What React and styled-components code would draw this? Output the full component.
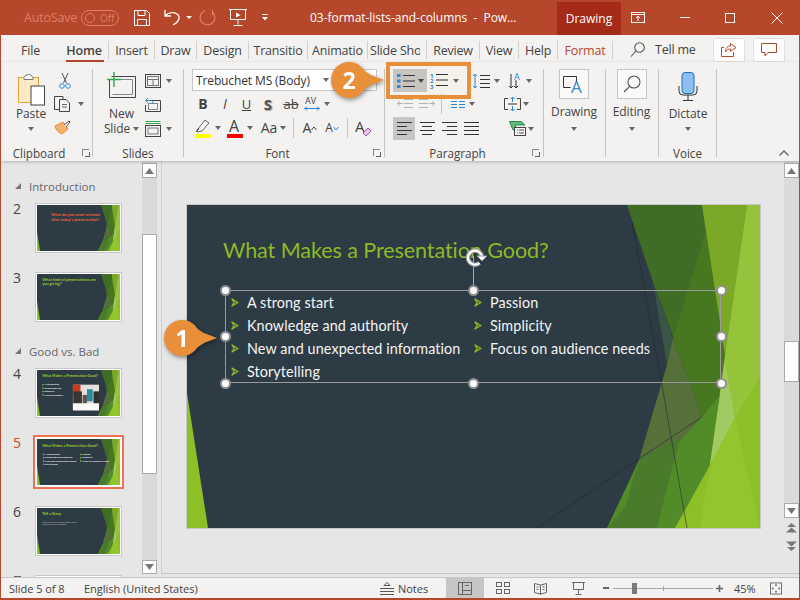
import React from "react";
import styled, { createGlobalStyle } from "styled-components";

const ui = `"Open Sans", "Noto Sans", "Liberation Sans", sans-serif`;
const slideFont = `"Lato", "Noto Sans", "Liberation Sans", sans-serif`;
const ink = "#444444";
const blue = "#2B88D8";
const orange = "#E98F3A";

const Global = createGlobalStyle`
  html, body { margin: 0; padding: 0; background: #E6E6E6; }
  * { box-sizing: border-box; }
`;

const Window = styled.div`
  position: relative; width: 800px; height: 600px; overflow: hidden;
  display: flex; flex-direction: column;
  border: solid #B7472A; border-width: 0 1px 2px 1px;
  background: #E6E6E6; font-family: ${ui}; color: ${ink};
`;

/* Title bar */
const TitleBar = styled.header`
  height: 35px; flex: none; display: flex; align-items: center;
  background: #B7472A; color: #fff; margin: 0 -1px; font-size: 12px;
`;
const AutoSave = styled.span`margin-left: 24px; width: 57px; color: #DE7F68; font-size: 12.5px; letter-spacing: -.2px;`;
const Toggle = styled.span`
  width: 38px; height: 16px; border: 1.4px solid #DE7F68; border-radius: 8px;
  color: #DE7F68; font-size: 10px; display: flex; align-items: center; gap: 5px; padding-left: 3px;
  &::before { content: ""; width: 8px; height: 8px; border-radius: 50%; border: 1.3px solid #DE7F68; }
`;
const Slot = styled.span`
  flex: none; display: inline-flex; align-items: center; justify-content: center;
  width: ${p => p.$w}px; margin-left: ${p => p.$l || 0}px;
`;
const DocTitle = styled.span`margin-left: 41px; width: 247px; white-space: pre; letter-spacing: -.03px;`;
const ContextTab = styled.span`
  width: 64px; height: 33px; margin-top: 2px; background: #A42B17;
  display: flex; align-items: center; justify-content: center;
`;

/* Tabs */
const TabRow = styled.nav`
  height: 27px; flex: none; display: flex; align-items: flex-start;
  background: #F3F2F1; font-size: 12.5px;
`;
const Tab = styled.span`
  position: relative; flex: none; width: ${p => p.$w}px; height: 18px; margin-top: 6px;
  display: flex; align-items: center; justify-content: center; white-space: nowrap;
  border-right: ${p => p.$plain ? "none" : "1px solid #D2D0CE"};
  color: ${p => p.$color || ink};
  font-weight: ${p => p.$active ? 600 : 400};
  letter-spacing: -.2px;
  ${p => p.$active && `&::after { content: ""; position: absolute; left: 6px; right: 4px; top: 19px; height: 2px; background: #B7472A; }`}
`;
const ClipText = styled.span`display: block; width: 50px; margin-left: -4px; overflow: hidden;`;
const SearchSlot = styled(Slot)`margin-top: 7px;`;
const SmallButton = styled.span`
  flex: none; width: 32px; height: 24px; margin: 3px 0 0 ${p => p.$l}px; background: #fff;
  border: 1px solid #E1DFDD; border-radius: 2px; display: flex; align-items: center; justify-content: center;
`;
const TellMe = styled.span`margin: 6px 0 0 10px; width: 48px; height: 18px; line-height: 18px; letter-spacing: -.2px;`;

/* Ribbon */
const Ribbon = styled.section`
  position: relative; z-index: 2; height: 99px; flex: none; display: flex; align-items: flex-start; padding-top: 7px;
  background: #F3F2F1; box-shadow: 0 1px 3px rgba(0,0,0,.22); font-size: 12px;
`;
const Group = styled.div`
  position: relative; flex: none; width: ${p => p.$w}px; height: 88px; display: flex; flex-direction: column;
  border-right: 1px solid ${p => p.$plain ? "transparent" : "#C4C4C4"};
`;
const GroupBody = styled.div`height: 76px; flex: none; display: flex; padding-left: ${p => p.$pl || 0}px;`;
const GroupLabel = styled.div`
  height: 16px; line-height: 16px; text-align: center; font-size: 11.7px; color: ${ink};
  padding-right: ${p => p.$pr || 0}px; letter-spacing: -.05px;
`;
const Launcher = styled.span`
  position: absolute; left: ${p => p.$l}px; top: 80px; width: 7px; height: 7px;
  border: solid #8A8886; border-width: 1px 0 0 1px;
  &::after { content: ""; position: absolute; right: -1px; bottom: -1px; width: 4px; height: 4px; border: solid #605E5C; border-width: 0 1px 1px 0; }
`;
const Caret = styled.span`
  flex: none; display: inline-block; width: 0; height: 0; margin-left: ${p => p.$l ?? 3}px; margin-right: ${p => p.$r ?? 0}px;
  border: solid transparent; border-width: 4px 3.5px 0; border-top-color: ${p => p.$c || "#666"};
`;
const BigCol = styled.div`
  flex: none; width: ${p => p.$w}px; display: flex; flex-direction: column; align-items: center; line-height: 15px;
  letter-spacing: -.1px;
`;
const BigText = styled.span`margin-top: ${p => p.$t || 0}px; display: flex; align-items: center; height: 15px;`;
const BigCaret = styled(Caret)`margin-top: ${p => p.$t}px;`;
const BigIcon = styled.span`
  flex: none; display: inline-flex; align-items: center; justify-content: center; margin-top: ${p => p.$t}px;
`;
const StackCol = styled.div`flex: none; margin-left: ${p => p.$l}px; display: flex; flex-direction: column;`;
const ToolRow = styled.div`
  display: flex; align-items: center; height: ${p => p.$h}px; margin-top: ${p => p.$t || 0}px; padding-left: ${p => p.$pl || 0}px;
`;
const Tool = styled.span`
  flex: none; display: inline-flex; align-items: center; justify-content: center;
  width: ${p => p.$w}px; height: 100%; margin-left: ${p => p.$l || 0}px;
  background: ${p => p.$bg || "transparent"};
`;
const Glyph = styled.span`
  font-size: ${p => p.$s || 14}px; font-weight: ${p => p.$b ? 700 : 400}; font-style: ${p => p.$i ? "italic" : "normal"};
  text-decoration: ${p => p.$d || "none"}; color: ${ink}; line-height: 1;
`;
const ShadowGlyph = styled(Glyph)`color: #555; text-shadow: 1px 1px 1px #999;`;
const Combo = styled.div`
  width: 185px; height: 22px; margin-left: 8px; background: #fff; border: 1px solid #C8C6C4;
  display: flex; align-items: center; padding-left: 3px; font-size: 12px; letter-spacing: -.12px; color: #333;
`;
const ComboText = styled.span`flex: none; width: 127px; white-space: nowrap;`;
const VSep = styled.span`flex: none; width: 1px; height: ${p => p.$h}px; background: #C8C6C4; margin-left: ${p => p.$l}px;`;
const SquareIcon = styled.div`
  width: 30px; height: 30px; background: #FAF9F8; border: 1px solid #C8C6C4; display: flex; align-items: center; justify-content: center;
`;
const Collapse = styled.svg`position: absolute; right: 10px; top: 88px;`;

/* Workspace */
const Workspace = styled.main`flex: 1; min-height: 0; display: flex; background: #E6E6E6;`;
const Pane = styled.aside`flex: none; width: 141px; height: 100%; overflow: hidden; display: flex; flex-direction: column; padding-top: 15px;`;
const Section = styled.div`
  flex: none; height: 20px; margin-top: ${p => p.$t || 0}px; display: flex; align-items: center; gap: 8px; padding-left: 14px; font-size: 11.5px; color: #666;
  &::before { content: ""; width: 0; height: 0; border: solid transparent; border-width: 0 0 6px 6px; border-bottom-color: #777; }
`;
const ThumbRow = styled.div`flex: none; display: flex; margin-top: ${p => p.$t}px; padding-left: 12px;`;
const Num = styled.span`width: 22px; font-size: 14px; line-height: 16px; margin-top: -2px; color: ${p => p.$on ? "#C8472B" : "#444"};`;
const NumSliver = styled.span`width: 22px; display: block; &::before { content: ""; display: block; width: 7px; height: 1px; margin: 1px 0 0 1px; background: #666; }`;
const Thumb = styled.div`
  width: 87px; height: 50px; background: #fff; border: 1px solid #C8C8C8; padding: 1px 1px;
  ${p => p.$on && `border: 1px solid #fff; box-shadow: 0 0 0 2px #F0704F; padding: 1px;`}
  display: flex; svg { display: block; width: 100%; height: 100%; }
`;
const SideBar = styled.div`
  flex: none; width: 15px; height: ${p => p.$h}; margin-top: ${p => p.$mt || 0}px; background: #DADADA; display: flex; flex-direction: column;
`;
const ScrollBtn = styled.span`
  flex: none; height: ${p => p.$h || 15}px; background: #fff; border: 1px solid #ABABAB; display: flex; align-items: center; justify-content: center;
`;
const TopGutter = styled.span`flex: none; height: 2px;`;
const ScrollTrack = styled.div`flex: 1; padding-top: ${p => p.$t}px;`;
const ScrollThumb = styled.div`height: ${p => p.$h}px; background: #fff; border: 1px solid #ABABAB;`;
const Divider = styled.div`flex: none; width: 1px; margin: 0 0 3px 4px; background: #CFCFCF;`;
const Canvas = styled.div`
  flex: 1; min-width: 0; height: 413px; padding: 44px 0 0 25px; border-bottom: 1px solid #C6C6C6;
`;
const Rail = styled.div`flex: none; width: 15px; height: 413px; display: flex; flex-direction: column; align-items: center; border-bottom: 1px solid #C6C6C6;`;
const RailMark = styled.span`flex: none; display: flex; margin-top: ${p => p.$t}px;`;
const SlideFrame = styled.div`
  position: relative; width: 573px; height: 323px; background: #2D3B44; outline: 1px solid #C8C8C8;
  svg.art { position: absolute; inset: 0; width: 100%; height: 100%; }
`;
const SlideTitle = styled.div`
  position: absolute; left: 36px; top: 30px; font-family: ${slideFont}; font-size: 21.6px; line-height: 30px; color: #8CBA26; white-space: nowrap; letter-spacing: -.1px;
`;
const TextBox = styled.div`
  position: absolute; left: 38px; top: 85px; width: 496px; height: 93px; border: 1px solid #9A9A9A;
  display: grid; grid-template-columns: 243px 1fr; padding: 0 0 0 5px; align-content: start;
`;
const BulletCol = styled.ul`margin: 0; padding: 0; list-style: none;`;
const Bullet = styled.li`
  height: 23px; display: flex; align-items: center; gap: 8px; font-family: ${slideFont}; font-size: 14.36px; color: #F4F4F4; white-space: nowrap;
  letter-spacing: .1px;
  svg { flex: none; }
`;
const Handle = styled.span`
  position: absolute; left: ${p => p.$x}px; top: ${p => p.$y}px; width: 11px; height: 11px; margin: -5.5px 0 0 -5.5px;
  background: #fff; border: 2px solid #8F8F8F; border-radius: 50%;
`;
const RotateStem = styled.span`position: absolute; left: 286px; top: 51px; width: 1px; height: 34px; background: #A8A8A8;`;
const RotateIcon = styled.svg`position: absolute; left: 277px; top: 40px;`;

/* Overlays */
const Callout = styled.div`
  position: absolute; z-index: 5; left: ${p => p.$x}px; top: ${p => p.$y}px; width: 36px; height: 36px; border-radius: 50%;
  background: ${orange}; color: #fff; font-family: ${ui}; font-weight: 700; font-size: 23px;
  display: flex; align-items: center; justify-content: center; filter: drop-shadow(1px 2px 2px rgba(0,0,0,.4));
  &::after {
    content: ""; position: absolute; left: 28px; top: 5px; width: 25px; height: 26px; background: ${orange};
    clip-path: polygon(0 0, 45% 30%, 100% 50%, 50% 68%, 0 100%);
  }
`;
const CalloutText = styled.span`position: relative; z-index: 1;`;
const Highlight = styled.div`
  position: absolute; z-index: 4; left: 385px; top: 62px; width: 85px; height: 37px; border: 4px solid ${orange}; pointer-events: none;
`;

/* Status */
const StatusBar = styled.footer`
  position: relative; height: 21px; flex: none; display: flex; align-items: center; background: #F3F2F1;
  border-top: 1px solid #C6C6C6; font-size: 11px; color: ${ink};
`;
const StatusText = styled.span`flex: none; margin-left: ${p => p.$l}px; width: ${p => p.$w}px; white-space: nowrap; letter-spacing: -.03px;`;
const ViewBtn = styled.span`
  flex: none; height: 100%; width: ${p => p.$w}px; margin-left: ${p => p.$l || 0}px; display: flex; align-items: center; justify-content: center;
  background: ${p => p.$on ? "#C8C6C4" : "transparent"};
`;
const ZoomTrack = styled.span`
  position: relative; flex: none; width: 100px; height: 1px; background: #A6A6A6; margin-left: 4px;
  &::before { content: ""; position: absolute; left: 50px; top: -2px; width: 1px; height: 5px; background: #A6A6A6; }
  &::after { content: ""; position: absolute; left: 19px; top: -5px; width: 5px; height: 11px; background: #7A7A7A; }
`;

/* Icons */
const S = ({ w, h, children, stroke = ink, sw = 1 }) => (
  <svg width={w} height={h} viewBox={`0 0 ${w} ${h}`} fill="none" stroke={stroke} strokeWidth={sw}>{children}</svg>
);

const Art = ({ children }) => (
  <svg className="art" viewBox="0 0 573 323" preserveAspectRatio="none">
    <rect width="573" height="323" fill="#2D3B44" />
    <polygon points="0,188 21,323 0,323" fill="#8DBF26" />
    <polygon points="515,0 573,0 573,323 420,323 515,212 525,120" fill="#528C28" />
    <polygon points="440,0 515,0 538,150 525,238 466,77" fill="#406D25" />
    <polygon points="520,23 538,150 533,190 515,212 486,133" fill="#47771F" />
    <polygon points="515,0 560,0 538,150" fill="#7BA927" />
    <polygon points="560,0 573,0 573,173 523,260 538,150" fill="#95C43B" />
    <polygon points="466,77 486,133 515,212 493,235 480,160" fill="#3B5544" />
    <polygon points="486,133 515,212 493,235 453,253 438,302 480,160" fill="#56703A" />
    <polygon points="420,323 453,253 493,235 515,212 533,190 525,238 521,260 488,323" fill="#528C28" />
    <polygon points="438,302 453,253 493,235 482,275 470,323 420,323" fill="#4A7A2C" />
    <polygon points="538,157 548,213 523,260" fill="#A2CA63" />
    <polygon points="573,173 573,323 488,323 523,260 548,213" fill="#8DBF26" />
    <polygon points="523,260 548,213 573,323 513,323" fill="#93C52F" />
    <polyline points="445,17 475,180 500,323" stroke="#1E2A2E" strokeWidth="1" opacity=".55" fill="none" />
    <polyline points="350,323 453,253 515,212" stroke="#1E2A2E" strokeWidth="1" opacity=".6" fill="none" />
    {children}
  </svg>
);

const Tiny = ({ x, y, c = "#9CCB2E", s = 24, b, children }) => (
  <text x={x} y={y} fill={c} fontSize={s} fontFamily="Lato, sans-serif" fontWeight={b ? 700 : 400}>{children}</text>
);
const TinyList = ({ x, items, y0 = 105, step = 21 }) => items.map((t, i) => (
  <g key={t}>
    <rect x={x} y={y0 + i * step - 9} width="9" height="9" fill="#9CCB2E" />
    <Tiny x={x + 15} y={y0 + i * step} c="#F2F4F4" s={17} b>{t}</Tiny>
  </g>
));

const Chevron = () => (
  <S w={8} h={9} stroke="#8CBA26" sw={1.2}><path d="M.7.8 7 4.500.7 8.200 3 4.500Z" fill="#8CBA26" fillOpacity=".35" /></S>
);

const PasteIcon = () => (
  <S w={27} h={34}>
    <rect x=".5" y="5.5" width="20" height="25" fill="#FCE9C6" stroke="#E8A13A" />
    <path d="M6 5.5 L8 3 h1 a2 2 0 0 1 3 0 h1 l2 2.5 v2 h-9 z" fill="#fff" stroke="#777" />
    <rect x="13" y="14" width="13.5" height="19" fill="#fff" stroke={ink} />
  </S>
);
const ScissorsIcon = () => (
  <S w={12} h={17}>
    <path d="M3 1 L7.5 11 M9 1 L4.5 11" stroke="#555" />
    <circle cx="3" cy="14" r="2.3" stroke={blue} /><circle cx="9" cy="14" r="2.3" stroke={blue} />
  </S>
);
const CopyIcon = () => (
  <S w={17} h={16}>
    <path d="M5 13.5H.5V.5H9V3" /><path d="M5.5 3.5H12L15.5 7V15.5H5.5Z" fill="#F3F2F1" /><path d="M8 8.5h5M8 11h5" stroke="#666" />
  </S>
);
const PainterIcon = () => (
  <S w={17} h={15}>
    <path d="M1 6 L9 2 L14 9 L8 14 C6 13 2 11 1 6Z" fill="#F6B26B" stroke="#E48A2E" />
    <path d="M10 5 L15 1 L16 2 L12 7" fill="#fff" stroke="#555" />
  </S>
);
const NewSlideIcon = () => (
  <S w={32} h={28}>
    <path d="M5.5 5.5H29.5V26.5H3.5V8" stroke="#444" /><path d="M8.5 8.5H26.5V23.5H6.5" stroke="#888" />
    <path d="M1 8.5H15M8 1V16" stroke="#2FA84F" strokeWidth="1.4" />
  </S>
);
const LayoutIcon = () => (
  <S w={16} h={14}><rect x=".5" y=".5" width="15" height="13" /><rect x="2.5" y="2.5" width="11" height="9" stroke="#777" /><path d="M2.5 5.5h11M8 5.5v6" stroke="#777" /></S>
);
const ResetIcon = () => (
  <S w={16} h={15}>
    <path d="M5 3.5h10.5v11H.5V8" /><rect x="3.5" y="6.5" width="9" height="6" stroke="#888" />
    <path d="M1 3.5h5M3 1 .8 3.5 3 6M6 3.5 C7.5 3.5 8 5 8 7" stroke={blue} />
  </S>
);
const SectionIcon = () => (
  <S w={16} h={17}><path d="M.5 1.5h15M.5 3.5h15" stroke="#2FA84F" /><rect x=".5" y="5.5" width="15" height="11" /><rect x="3" y="8" width="10" height="6" stroke="#777" /></S>
);
const BulletsIcon = () => (
  <S w={18} h={16}>
    {[1, 6.5, 12].map(y => <g key={y}><rect x="0" y={y} width="3.5" height="3" fill={blue} stroke="none" /><path d={`M6 ${y + 1.5}h12`} stroke="#333" /></g>)}
  </S>
);
const NumbersIcon = () => (
  <S w={18} h={16}>
    {[3.5, 9, 14.5].map((y, i) => <g key={y}><text x="0" y={y + 1} fontSize="6" fontWeight="700" fill={blue} stroke="none" fontFamily="Open Sans">{i + 1}</text><path d={`M6 ${y - 2}h12`} stroke="#333" /></g>)}
  </S>
);
const IndentIcon = ({ flip }) => (
  <S w={16} h={12} stroke="#B4B2B0">
    <g transform={flip ? "translate(16 0) scale(-1 1)" : undefined}>
      <path d="M7 1.5h9M7 5.5h9M7 9.5h9M0 5.5h6M3 3 .5 5.5 3 8" />
    </g>
  </S>
);
const AlignIcon = ({ m }) => {
  const sx = m === "c" ? 2 : m === "r" ? 5 : 0;
  const sw = m === "j" ? 15 : 10;
  return (
    <S w={15} h={13} stroke="#333">
      {[[0, 15], [sx, sw], [0, 15], [sx, sw]].map(([x, w], i) => (
        <path key={i} d={`M${x} ${i * 4 + .5}h${w}`} />
      ))}
    </S>
  );
};

const thumbs = {
  2: <Art><Tiny x={97} y={80} c="#F0603A" s={28} b>What do you want to know</Tiny><Tiny x={97} y={112} c="#F0603A" s={28} b>after today's presentation?</Tiny></Art>,
  3: <Art><Tiny x={36} y={50} s={27} b>What kind of presentations are</Tiny><Tiny x={36} y={80} s={27} b>you giving?</Tiny></Art>,
  4: (
    <Art>
      <Tiny x={36} y={50} s={25} b>What Makes a Presentation Good?</Tiny>
      <TinyList x={36} items={["A strong start", "Knowledge and", "authority", "New information"]} y0={108} step={24} />
      <rect x="248" y="103" width="180" height="180" fill="#E4E0DC" />
      <rect x="248" y="103" width="52" height="62" fill="#C93A16" />
      <rect x="250" y="150" width="60" height="85" fill="#3B3633" />
      <rect x="315" y="175" width="30" height="60" fill="#5C5552" />
      <rect x="345" y="135" width="40" height="85" fill="#2E8A9E" />
      <rect x="390" y="150" width="38" height="85" fill="#34302E" />
      <rect x="248" y="235" width="180" height="48" fill="#FAF9F8" />
    </Art>
  ),
  5: (
    <Art>
      <Tiny x={36} y={55} s={25} b>What Makes a Presentation Good?</Tiny>
      <TinyList x={41} items={["A strong start", "Knowledge and authority", "New and unexpected inform.", "Storytelling"]} y0={113} step={23} />
      <TinyList x={297} items={["Passion", "Simplicity", "Focus on audience needs"]} y0={113} step={23} />
    </Art>
  ),
  6: (
    <Art>
      <Tiny x={36} y={50} s={27} b>Tell a Story</Tiny>
      <Tiny x={36} y={105} c="#AEB9BD" s={15}>Stories make your presentation more</Tiny>
      <Tiny x={36} y={122} c="#AEB9BD" s={15}>memorable and engaging.</Tiny>
    </Art>
  ),
};

const ArrowTri = ({ down, c = "#777" }) => (
  <S w={9} h={6}><path d={down ? "M0 0h9L4.5 6z" : "M4.5 0 9 6H0z"} fill={c} stroke="none" /></S>
);
const DoubleTri = ({ down }) => (
  <S w={11} h={10}>
    <g transform={down ? "translate(0 10) scale(1 -1)" : undefined}>
      <path d="M5.5 0 10 4H1z M5.5 4.500 11 9.500H0z" fill="#777" stroke="none" />
    </g>
  </S>
);
const handles = [[38, 85], [286, 85], [534, 85], [38, 131], [534, 131], [38, 178], [286, 178], [534, 178]];

export default function App() {
  return (
    <>
      <Global />
      <Window>
        <TitleBar>
          <AutoSave>AutoSave</AutoSave>
          <Toggle>Off</Toggle>
          <Slot $w={16} $l={15}>
            <S w={16} h={16} stroke="#fff"><path d="M.5.5h12l3 3v12H.5z" /><path d="M4 .5v5h7v-5M3.5 15.5v-6h9v6" /></S>
          </Slot>
          <Slot $w={19} $l={14}>
            <S w={19} h={17} stroke="#fff" sw={1.3}><path d="M1 1v6h6M1.5 6.5 C5 3 10 3 13 5 C17 8 15 13 9 16" /></S>
          </Slot>
          <Slot $w={6} $l={3}><S w={6} h={3}><path d="M0 0h6L3 3z" fill="#fff" stroke="none" /></S></Slot>
          <Slot $w={17} $l={7}>
            <S w={17} h={17} stroke="#D9826A" sw={1.2}><path d="M6 1.5C1.5 3.500 0 8 2 12c2 4 8 5 11.500 2 3.500-3 3-8 0-11" /><path d="M13.500 1v5" /></S>
          </Slot>
          <Slot $w={20} $l={12}>
            <S w={20} h={18} stroke="#fff"><path d="M1 .5h18M2.500.5v10h15V.5M10 10.500v5M5.500 16.500h9" /><path d="M8 3.500 12.500 6 8 8.500z" fill="#fff" stroke="none" /></S>
          </Slot>
          <Slot $w={8} $l={13}><S w={8} h={7} stroke="#fff"><path d="M1.500.5h5" /><path d="M1 3h6L4 6.500z" fill="#fff" stroke="none" /></S></Slot>
          <DocTitle>03-format-lists-and-columns  -  Pow...</DocTitle>
          <ContextTab>Drawing</ContextTab>
          <Slot $w={14} $l={10}>
            <S w={14} h={11} stroke="#fff"><rect x=".5" y=".5" width="13" height="10" /><path d="M.5 2.500h13M7 9V4.500M5 6l2-2 2 2" /></S>
          </Slot>
          <Slot $w={10} $l={35}><S w={10} h={1} stroke="#fff"><path d="M0 .5h10" /></S></Slot>
          <Slot $w={10} $l={35}><S w={10} h={10} stroke="#fff"><rect x=".5" y=".5" width="9" height="9" /></S></Slot>
          <Slot $w={12} $l={36}><S w={12} h={12} stroke="#fff"><path d="M.5.5l11 11M11.500.5l-11 11" /></S></Slot>
        </TitleBar>

        <TabRow>
          <Tab $w={59} $plain>File</Tab>
          <Tab $w={49} $active>Home</Tab>
          <Tab $w={46}>Insert</Tab>
          <Tab $w={42}>Draw</Tab>
          <Tab $w={52}>Design</Tab>
          <Tab $w={59}>Transitio</Tab>
          <Tab $w={60}>Animatio</Tab>
          <Tab $w={59}><ClipText>Slide Show</ClipText></Tab>
          <Tab $w={53}>Review</Tab>
          <Tab $w={39}>View</Tab>
          <Tab $w={39}>Help</Tab>
          <Tab $w={55} $color="#B7472A">Format</Tab>
          <SearchSlot $w={15} $l={17}>
            <S w={15} h={15} stroke="#555" sw={1.1}><circle cx="9.500" cy="5.500" r="4.800" /><path d="M6 9 1 14.500" /></S>
          </SearchSlot>
          <TellMe>Tell me</TellMe>
          <SmallButton $l={10}>
            <S w={16} h={14} stroke="#B7472A"><path d="M9.500.5 15 4.500 9.500 8.500V6C7 6 5.500 7 4.500 9 4.500 5 6 3 9.500 3zM12.500 9v4.500H.5V4.500H3" /></S>
          </SmallButton>
          <SmallButton $l={8}>
            <S w={16} h={14} stroke="#B7472A"><path d="M.5.5h15v9H7L4 13V9.500H.5z" /></S>
          </SmallButton>
        </TabRow>

        <Ribbon>
          <Group $w={92}>
            <GroupBody $pl={11}>
              <BigCol $w={38}>
                <BigIcon $t={3}><PasteIcon /></BigIcon>
                <BigText>Paste</BigText>
                <BigCaret $l={0} $t={6} />
              </BigCol>
              <StackCol $l={4}>
                <ToolRow $h={22} $pl={5}><ScissorsIcon /></ToolRow>
                <ToolRow $h={24} $t={1}><CopyIcon /><Caret $l={7} /></ToolRow>
                <ToolRow $h={23}><PainterIcon /></ToolRow>
              </StackCol>
            </GroupBody>
            <GroupLabel $pr={15}>Clipboard</GroupLabel>
            <Launcher $l={81} />
          </Group>

          <Group $w={91}>
            <GroupBody $pl={12}>
              <BigCol $w={33}>
                <BigIcon $t={2}><NewSlideIcon /></BigIcon>
                <BigText $t={7}>New</BigText>
                <BigText>Slide<Caret $l={3} /></BigText>
              </BigCol>
              <StackCol $l={7}>
                <ToolRow $h={24}><LayoutIcon /><Caret $l={5} /></ToolRow>
                <ToolRow $h={23}><ResetIcon /></ToolRow>
                <ToolRow $h={25}><SectionIcon /><Caret $l={5} /></ToolRow>
              </StackCol>
            </GroupBody>
            <GroupLabel>Slides</GroupLabel>
          </Group>

          <Group $w={201}>
            <GroupBody>
              <StackCol $l={0}>
                <Combo><ComboText>Trebuchet MS (Body)</ComboText><Caret $l={0} /></Combo>
                <ToolRow $h={22} $t={2} $pl={8}>
                  <Tool $w={22}><Glyph $b $s={14}>B</Glyph></Tool>
                  <Tool $w={22}><Glyph $i $s={14}>I</Glyph></Tool>
                  <Tool $w={21}><Glyph $d="underline" $s={13}>U</Glyph></Tool>
                  <Tool $w={22}><ShadowGlyph $b $s={15}>S</ShadowGlyph></Tool>
                  <Tool $w={24}><Glyph $d="line-through" $s={13}>ab</Glyph></Tool>
                  <Tool $w={18}>
                    <S w={16} h={16}>
                      <text x="1" y="8" fontSize="9" fill={ink} stroke="none" fontFamily="Open Sans">AV</text>
                      <path d="M0 12.500h16M3 10.500l-2 2 2 2M13 10.500l2 2-2 2" stroke={blue} />
                    </S>
                  </Tool>
                  <Caret $l={3} />
                </ToolRow>
                <ToolRow $h={24} $t={1} $pl={9}>
                  <Tool $w={20}>
                    <S w={17} h={21}><path d="M3 11 L10 2 L14 5 L7 13 L2 14Z" fill="#F3F2F1" stroke="#666" /><path d="M1 13.500 L4 10" stroke="#333" /><rect y="16" x="0" width="16" height="4" fill="#FFFF00" stroke="none" /></S>
                  </Tool>
                  <Caret $l={2} />
                  <Tool $w={20} $l={4}>
                    <S w={17} h={21}><text x="2" y="14" fontSize="16" fill={ink} stroke="none" fontFamily="Open Sans">A</text><rect y="16" x="0" width="16" height="4" fill="#F00000" stroke="none" /></S>
                  </Tool>
                  <Caret $l={2} />
                  <Tool $w={20} $l={6}><Glyph $s={14}>Aa</Glyph></Tool>
                  <Caret $l={1} />
                  <VSep $l={7} $h={20} />
                  <Tool $w={20} $l={6}><Glyph $s={14}>A</Glyph><S w={6} h={5} stroke={ink}><path d="M.5 4 3 1l2.500 3" /></S></Tool>
                  <Tool $w={18} $l={3}><Glyph $s={12}>A</Glyph><S w={6} h={5} stroke={blue}><path d="M.5 1 3 4l2.500-3" /></S></Tool>
                  <VSep $l={6} $h={20} />
                  <Tool $w={18} $l={6}>
                    <S w={17} h={18}><text x="0" y="13" fontSize="15" fill={ink} stroke="none" fontFamily="Open Sans">A</text><path d="M8 14 L13 9 L16 12 L11 17Z" fill="#E6C7F0" stroke="#A94CB5" /></S>
                  </Tool>
                </ToolRow>
              </StackCol>
            </GroupBody>
            <GroupLabel $pr={13}>Font</GroupLabel>
            <Launcher $l={189} />
          </Group>

          <Group $w={159}>
            <GroupBody>
              <StackCol $l={0}>
                <ToolRow $h={23} $pl={8}>
                  <Tool $w={34} $bg="#C8C4C0"><BulletsIcon /><Caret $l={3} $c="#444" /></Tool>
                  <Tool $w={34} $bg="#F4F0EA"><NumbersIcon /><Caret $l={5} /></Tool>
                  <Tool $w={18} $l={11}>
                    <S w={18} h={16}>
                      <path d="M3 1v14M1 3l2-2 2 2M1 13l2 2 2-2" stroke={blue} /><path d="M8 2.500h10M8 6.500h10M8 10.500h10M8 14.500h10" stroke="#333" />
                    </S>
                  </Tool>
                  <Caret $l={4} />
                  <Tool $w={16} $l={7}>
                    <S w={16} h={17}>
                      <path d="M4 2v14M2 14l2 2 2-2M9 8v8M7 14l2 2 2-2" stroke="#333" />
                      <text x="7" y="8" fontSize="9" fill={blue} stroke="none" fontFamily="Open Sans">A</text>
                    </S>
                  </Tool>
                  <Caret $l={3} />
                </ToolRow>
                <ToolRow $h={24} $pl={12}>
                  <Tool $w={16}><IndentIcon /></Tool>
                  <Tool $w={16} $l={6}><IndentIcon flip /></Tool>
                  <VSep $l={6} $h={20} />
                  <Tool $w={14} $l={9}>
                    <S w={14} h={7} stroke={blue}><path d="M0 .5h6M8 .5h6M0 3.500h6M8 3.500h6M0 6.500h6M8 6.500h6" /></S>
                  </Tool>
                  <Caret $l={4} />
                  <Tool $w={17} $l={29}>
                    <S w={17} h={16}>
                      <path d="M4 2.500H.5v11H4M13 2.500h3.500v11H13" /><path d="M4 8h9" stroke="#333" /><path d="M8.500 1v5M6.500 3l2-2 2 2M8.500 10v5M6.500 13l2 2 2-2" stroke={blue} />
                    </S>
                  </Tool>
                  <Caret $l={2} />
                </ToolRow>
                <ToolRow $h={23} $t={1} $pl={8}>
                  <Tool $w={22} $bg="#C8C6C4"><AlignIcon m="l" /></Tool>
                  <Tool $w={22} $l={1}><AlignIcon m="c" /></Tool>
                  <Tool $w={22}><AlignIcon m="r" /></Tool>
                  <Tool $w={22}><AlignIcon m="j" /></Tool>
                  <Tool $w={17} $l={27}>
                    <S w={17} h={15}>
                      <path d="M.5.500H12L16 4H6L8 9H4Z" fill="#5FB97A" stroke="#2F8F50" />
                      <rect x="5.500" y="6.500" width="11" height="8" fill="#fff" stroke="#444" />
                      <path d="M8 9h1M10 9h5M8 12h1M10 12h5" stroke="#444" />
                    </S>
                  </Tool>
                  <Caret $l={2} />
                </ToolRow>
              </StackCol>
            </GroupBody>
            <GroupLabel $pr={13}>Paragraph</GroupLabel>
            <Launcher $l={147} />
          </Group>

          <Group $w={62}>
            <BigCol $w={60}>
              <SquareIcon>
                <S w={22} h={20}>
                  <path d="M7.500 13.500H.5V2.500h13V7" stroke="#333" />
                  <text x="8" y="19" fontSize="17" fill={blue} stroke="none" fontFamily="Open Sans">A</text>
                </S>
              </SquareIcon>
              <BigText $t={5}>Drawing</BigText>
              <BigCaret $l={0} $t={8} />
            </BigCol>
          </Group>

          <Group $w={53}>
            <BigCol $w={51}>
              <SquareIcon>
                <S w={18} h={18} stroke="#555" sw={1.1}><circle cx="11" cy="7" r="6" /><path d="M6.500 11.500 1 17" /></S>
              </SquareIcon>
              <BigText $t={5}>Editing</BigText>
              <BigCaret $l={0} $t={8} />
            </BigCol>
          </Group>

          <Group $w={58}>
            <GroupBody>
              <BigCol $w={58}>
                <BigIcon $t={3}>
                  <S w={20} h={30}>
                    <rect x="4" y=".5" width="12" height="21" rx="3" fill="#8DC0EE" stroke="#1F72BE" />
                    <path d="M1 14v5a4 4 0 0 0 4 4h10a4 4 0 0 0 4-4v-5M10 23v5M5 28.500h10" stroke="#333" />
                  </S>
                </BigIcon>
                <BigText $t={4}>Dictate</BigText>
                <BigCaret $l={0} $t={6} />
              </BigCol>
            </GroupBody>
            <GroupLabel>Voice</GroupLabel>
          </Group>

          <Collapse width="10" height="6" viewBox="0 0 10 6" fill="none" stroke="#666" strokeWidth="1.4">
            <path d="M.5 5.500 5 1l4.500 4.500" />
          </Collapse>
        </Ribbon>

        <Workspace>
          <Pane>
            <Section>Introduction</Section>
            <ThumbRow $t={7}><Num>2</Num><Thumb>{thumbs[2]}</Thumb></ThumbRow>
            <ThumbRow $t={19}><Num>3</Num><Thumb>{thumbs[3]}</Thumb></ThumbRow>
            <Section $t={19}>Good vs. Bad</Section>
            <ThumbRow $t={7}><Num>4</Num><Thumb>{thumbs[4]}</Thumb></ThumbRow>
            <ThumbRow $t={19}><Num $on>5</Num><Thumb $on>{thumbs[5]}</Thumb></ThumbRow>
            <ThumbRow $t={19}><Num>6</Num><Thumb>{thumbs[6]}</Thumb></ThumbRow>
            <ThumbRow $t={19}><NumSliver /><Thumb /></ThumbRow>
          </Pane>
          <SideBar $h="413px">
            <TopGutter />
            <ScrollBtn><ArrowTri /></ScrollBtn>
            <ScrollTrack $t={56}><ScrollThumb $h={240} /></ScrollTrack>
            <ScrollBtn $h={14}><ArrowTri down /></ScrollBtn>
          </SideBar>
          <Divider />
          <Canvas>
            <SlideFrame>
              <Art />
              <SlideTitle>What Makes a Presentation Good?</SlideTitle>
              <TextBox>
                <BulletCol>
                  {["A strong start", "Knowledge and authority", "New and unexpected information", "Storytelling"].map(t => (
                    <Bullet key={t}><Chevron />{t}</Bullet>
                  ))}
                </BulletCol>
                <BulletCol>
                  {["Passion", "Simplicity", "Focus on audience needs"].map(t => (
                    <Bullet key={t}><Chevron />{t}</Bullet>
                  ))}
                </BulletCol>
              </TextBox>
              <RotateStem />
              <RotateIcon width="24" height="24" viewBox="0 0 24 24" fill="none">
                <path d="M18 12a7 7 0 1 0-2.500 6" stroke="#999" strokeWidth="4.500" />
                <path d="M18 12a7 7 0 1 0-2.500 6" stroke="#fff" strokeWidth="2.200" />
                <path d="M13 11 L23 11 L18 16Z" fill="#fff" stroke="#999" />
              </RotateIcon>
              {handles.map(([x, y]) => <Handle key={`${x}-${y}`} $x={x} $y={y} />)}
            </SlideFrame>
          </Canvas>
          <Rail>
            <SideBar $h="357px">
              <TopGutter />
              <ScrollBtn><ArrowTri /></ScrollBtn>
              <ScrollTrack $t={163}><ScrollThumb $h={41} /></ScrollTrack>
              <ScrollBtn><ArrowTri down /></ScrollBtn>
            </SideBar>
            <RailMark $t={5}><DoubleTri /></RailMark>
            <RailMark $t={8}><DoubleTri down /></RailMark>
          </Rail>
        </Workspace>

        <StatusBar>
          <StatusText $l={8} $w={75}>Slide 5 of 8</StatusText>
          <StatusText $l={0} $w={296}>English (United States)</StatusText>
          <Slot $w={14}>
            <S w={14} h={13}><path d="M7 .5 10 3.500H4zM0 6.500h14M0 9.500h14M0 12.500h14" stroke="#555" /></S>
          </Slot>
          <StatusText $l={4} $w={48}>Notes</StatusText>
          <ViewBtn $w={38} $on>
            <S w={14} h={13} stroke="#666"><rect x=".5" y=".5" width="13" height="12" /><path d="M4.500.5v12M4.500 8.500h9M7 3.500h4" /></S>
          </ViewBtn>
          <ViewBtn $w={14} $l={12}>
            <S w={14} h={12} stroke="#666"><rect x=".5" y=".5" width="5" height="4" /><rect x="8.500" y=".5" width="5" height="4" /><rect x=".5" y="7.500" width="5" height="4" /><rect x="8.500" y="7.500" width="5" height="4" /></S>
          </ViewBtn>
          <ViewBtn $w={13} $l={24}>
            <S w={13} h={13} stroke="#666"><path d="M.5 1.500 6.500 3l6-1.500v9l-6 1.500-6-1.500zM6.500 3v9.500M2.500 5h2M2.500 7.500h2M8.500 5h2M8.500 7.500h2" /></S>
          </ViewBtn>
          <ViewBtn $w={13} $l={25}>
            <S w={13} h={13} stroke="#666"><path d="M0 .5h13M1.500 .5v7h10v-7M6.500 7.500v4M3.500 12.500h6" /></S>
          </ViewBtn>
          <Slot $w={6} $l={18}><S w={6} h={2} stroke="#666" sw={2}><path d="M0 1h6" /></S></Slot>
          <ZoomTrack />
          <Slot $w={7} $l={3}><S w={7} h={7} stroke="#666" sw={1.6}><path d="M0 3.500h7M3.500 0v7" /></S></Slot>
          <StatusText $l={11} $w={36}>45%</StatusText>
          <Slot $w={12}>
            <S w={13} h={13} stroke="#666"><rect x=".5" y=".5" width="12" height="12" /><path d="M6.500 2v2M5.500 3h2M6.500 9v2M5.500 10h2M2 6.500h2M3 5.500v2M9 6.500h2M10 5.500v2" /></S>
          </Slot>
        </StatusBar>

        <Highlight />
        <Callout $x={330} $y={62}><CalloutText>2</CalloutText></Callout>
        <Callout $x={163} $y={320}><CalloutText>1</CalloutText></Callout>
      </Window>
    </>
  );
}
